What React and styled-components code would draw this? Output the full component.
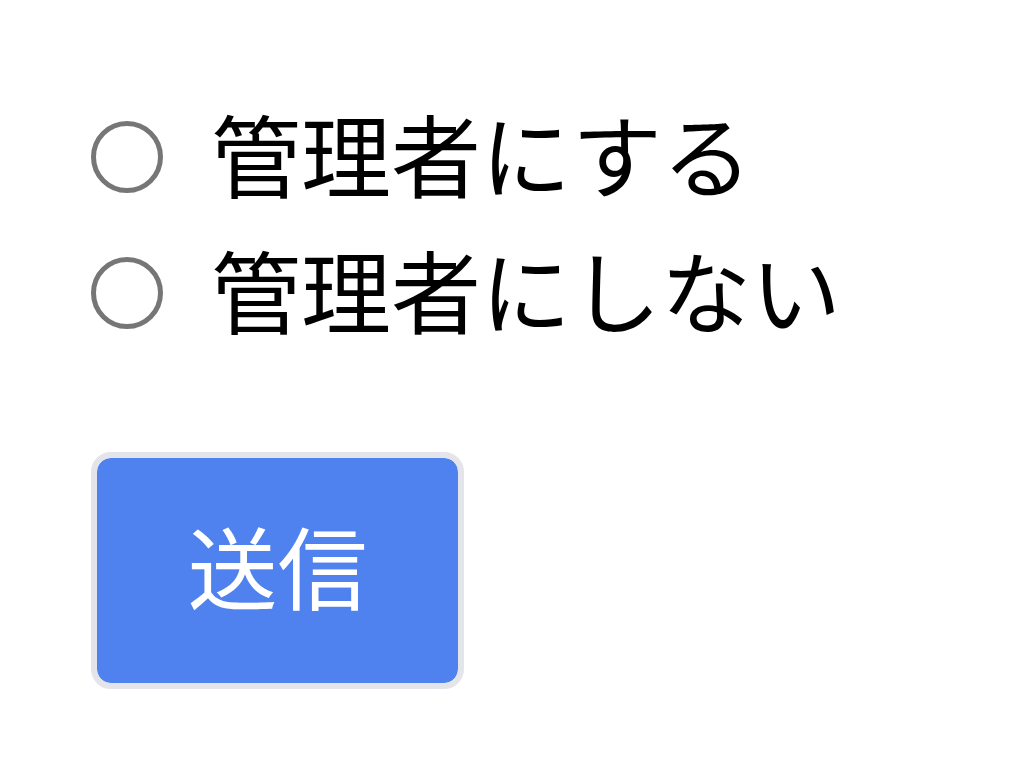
import React from 'react';
import styled, { createGlobalStyle } from 'styled-components';

const GlobalStyle = createGlobalStyle`
  html, body {
    margin: 0;
    padding: 0;
    background: #ffffff;
  }
  body {
    font-family: "Noto Sans CJK JP", "Noto Sans", sans-serif;
    color: #000000;
  }
`;

const Page = styled.form`
  display: flex;
  flex-direction: column;
  align-items: flex-start;
  padding: 89px 0 0 91px;
`;

const Options = styled.div`
  display: flex;
  flex-direction: column;
`;

const Option = styled.label`
  display: flex;
  align-items: center;
  height: 136px;
  cursor: pointer;
`;

const Radio = styled.input.attrs({ type: 'radio' })`
  appearance: none;
  margin: 0 48px 0 0;
  width: 72px;
  height: 72px;
  box-sizing: border-box;
  border: 5px solid #767676;
  border-radius: 50%;
  background: #ffffff;
  flex-shrink: 0;
`;

const OptionText = styled.span`
  font-size: 90px;
  line-height: 1;
  padding-bottom: 10px;
`;

const SubmitButton = styled.button`
  margin-top: 91px;
  width: 373px;
  height: 237px;
  box-sizing: border-box;
  border: 6px solid #e3e5ea;
  border-radius: 20px;
  background: #4f82ee;
  background-clip: padding-box;
  color: #ffffff;
  font-family: "Noto Sans CJK JP", "Noto Sans", sans-serif;
  font-size: 90px;
  line-height: 1;
  padding: 0 0 14px 0;
  cursor: pointer;
`;

function App() {
  return (
    <>
      <GlobalStyle />
      <Page onSubmit={(e) => e.preventDefault()}>
        <Options>
          <Option>
            <Radio name="admin" value="yes" />
            <OptionText>管理者にする</OptionText>
          </Option>
          <Option>
            <Radio name="admin" value="no" />
            <OptionText>管理者にしない</OptionText>
          </Option>
        </Options>
        <SubmitButton type="submit">送信</SubmitButton>
      </Page>
    </>
  );
}

export default App;
